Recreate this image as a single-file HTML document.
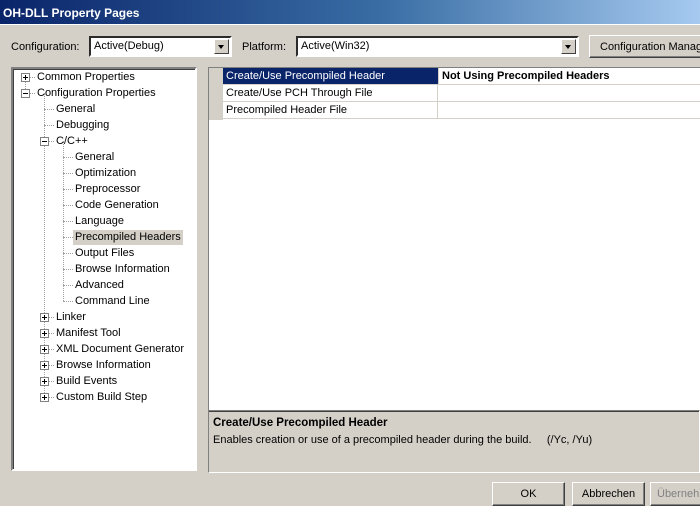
<!DOCTYPE html>
<html><head><meta charset="utf-8"><style>
*{margin:0;padding:0;box-sizing:border-box}
body{width:700px;height:500px;overflow:hidden;background:#d4d0c8;font-family:"Liberation Sans",Arial,sans-serif;font-size:11px;color:#000;position:relative}
.a{position:absolute;white-space:nowrap}
.title{left:0;top:0;width:700px;height:25px;background:linear-gradient(90deg,#0a246a 0%,#3a6ea5 55%,#a6caf0 100%);color:#fff;font-weight:bold;font-size:12px;padding:6px 0 0 3px;border-bottom:1px solid #fff}
.combo{height:21px;background:#fff;border:2px inset #e0ddd6;border-color:#808080 #fff #fff #808080;padding:2px 0 0 3px}
.arrow{position:absolute;right:1px;top:1px;width:15px;height:15px;background:#d4d0c8;border:1px solid;border-color:#fff #404040 #404040 #fff}
.arrow:after{content:"";position:absolute;left:3px;top:5px;border-left:3.5px solid transparent;border-right:3.5px solid transparent;border-top:4px solid #000}
.btn{background:#d4d0c8;border:1px solid;border-color:#fff #404040 #404040 #fff;box-shadow:inset -1px -1px 0 #808080;text-align:center}
.tree{left:11px;top:67px;width:186px;height:404px;background:#fff;border:2px solid;border-color:#808080 #fff #fff #808080;box-shadow:inset 1px 1px 0 #404040}
.pb{position:absolute;width:9px;height:9px;border:1px solid #808080;background:#fff;z-index:2}
.pb:before{content:"";position:absolute;left:1px;top:3px;width:5px;height:1px;background:#000}
.pb.p:after{content:"";position:absolute;left:3px;top:1px;width:1px;height:5px;background:#000}
.dh{position:absolute;height:1px;border-top:1px dotted #a0a0a0}
.dv{position:absolute;width:1px;border-left:1px dotted #a0a0a0}
.grid{left:208px;top:67px;width:492px;height:344px;background:#fff;border-top:1px solid #808080;border-left:1px solid #808080}
.row{position:absolute;left:14px;width:480px;height:17px;border-bottom:1px solid #d4d0c8}
.desc{left:208px;top:410px;width:492px;height:63px;border:1px solid;border-color:#808080 #fff #fff #808080;box-shadow:inset 0 1px 0 #404040}
</style></head><body>
<div class="a title">OH-DLL Property Pages</div>
<div class="a" style="left:11px;top:41px">Configuration:</div>
<div class="a combo" style="left:89px;top:36px;width:143px">Active(Debug)<div class="arrow"></div></div>
<div class="a" style="left:242px;top:41px">Platform:</div>
<div class="a combo" style="left:296px;top:36px;width:283px">Active(Win32)<div class="arrow"></div></div>
<div class="a btn" style="left:589px;top:35px;width:120px;height:23px;padding-top:5px;text-align:left;padding-left:10px">Configuration Manager...</div>

<div class="a tree">
<div class="dv" style="left:12px;top:8px;height:16px"></div>
<div class="dv" style="left:31px;top:24px;height:304px"></div>
<div class="dv" style="left:50px;top:72px;height:160px"></div>
<div id="t"></div>
</div>

<div class="a grid">
<div style="position:absolute;left:0;top:0;width:14px;height:52px;background:#d4d0c8"></div>
<div class="row" style="top:0"><div style="position:absolute;left:0;top:0;width:215px;height:16px;background:#0a246a;color:#fff;padding:2px 0 0 3px">Create/Use Precompiled Header</div><div style="position:absolute;left:215px;top:0;height:16px;border-left:1px solid #d4d0c8;font-weight:bold;padding:2px 0 0 3px">Not Using Precompiled Headers</div></div>
<div class="row" style="top:17px"><div style="position:absolute;left:0;top:0;width:215px;height:16px;padding:2px 0 0 3px;border-right:1px solid #d4d0c8">Create/Use PCH Through File</div></div>
<div class="row" style="top:34px"><div style="position:absolute;left:0;top:0;width:215px;height:16px;padding:2px 0 0 3px;border-right:1px solid #d4d0c8">Precompiled Header File</div></div>
</div>

<div class="a desc">
<div class="a" style="left:4px;top:6px;font-weight:bold;font-size:11.5px">Create/Use Precompiled Header</div>
<div class="a" style="left:4px;top:23px">Enables creation or use of a precompiled header during the build.&nbsp;&nbsp;&nbsp;&nbsp; (/Yc, /Yu)</div>
</div>

<div class="a btn" style="left:492px;top:482px;width:73px;height:24px;padding-top:5px">OK</div>
<div class="a btn" style="left:572px;top:482px;width:73px;height:24px;padding-top:5px">Abbrechen</div>
<div class="a btn" style="left:650px;top:482px;width:73px;height:24px;padding-top:5px;color:#808080;text-align:left;padding-left:6px">Übernehmen</div>

<script>
var items=[
[0,"Common Properties","p"],[0,"Configuration Properties","m"],[1,"General"],[1,"Debugging"],[1,"C/C++","m"],
[2,"General"],[2,"Optimization"],[2,"Preprocessor"],[2,"Code Generation"],[2,"Language"],[2,"Precompiled Headers",null,1],
[2,"Output Files"],[2,"Browse Information"],[2,"Advanced"],[2,"Command Line"],
[1,"Linker","p"],[1,"Manifest Tool","p"],[1,"XML Document Generator","p"],[1,"Browse Information","p"],[1,"Build Events","p"],[1,"Custom Build Step","p"]];
var lineX=[12,31,50], textX=[22,41,60];
var h="";
items.forEach(function(it,i){
 var cy=8+i*16, l=it[0], lx=lineX[l], tx=textX[l];
 if(it[2]) h+='<div class="pb '+(it[2]=="p"?"p":"")+'" style="left:'+(lx-4)+'px;top:'+(cy-4)+'px"></div>';
 var sx=it[2]?lx+5:lx;
 h+='<div class="dh" style="left:'+sx+'px;top:'+cy+'px;width:'+(tx-sx)+'px"></div>';
 h+='<div class="a" style="left:'+tx+'px;top:'+(cy-7)+'px;height:15px;padding:1px 2px;'+(it[3]?'background:#d4d0c8;':'')+'">'+it[1]+'</div>';
});
document.getElementById("t").innerHTML=h;
</script>
</body></html>
